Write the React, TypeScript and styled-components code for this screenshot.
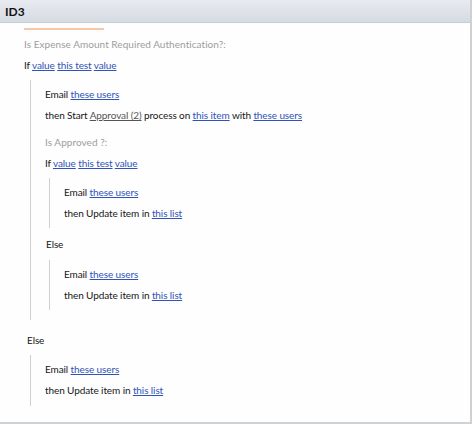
import React from 'react';
import styled, { createGlobalStyle } from 'styled-components';

const GlobalStyle = createGlobalStyle`
  html, body {
    margin: 0;
    padding: 0;
    background: #ffffff;
  }
  body {
    font-family: Lato, "Open Sans", "Liberation Sans", sans-serif;
    font-size: 10px;
    letter-spacing: -0.1px;
    color: #161616;
  }
`;

const Panel = styled.div`
  width: 470px;
  height: 422px;
  border-right: 2px solid #cfd0d2;
  border-bottom: 2px solid #d0d1d3;
  background: #fefefe;
  display: flex;
  flex-direction: column;
  overflow: hidden;
`;

const Header = styled.div`
  height: 22px;
  padding-left: 5px;
  display: flex;
  align-items: center;
  background: linear-gradient(to bottom, #e8ebf0 0%, #dde1e8 60%, #d6dae2 100%);
  border-bottom: 1px solid #c9cdd4;
  font-weight: 700;
  font-size: 12px;
  letter-spacing: 0;
  color: #111;
`;

const Body = styled.div`
  padding-left: 24px;
  display: flex;
  flex-direction: column;
`;

const Accent = styled.div`
  width: 80px;
  height: 2px;
  margin-top: 5px;
  background: #f6c8a6;
`;

const Row = styled.div<{ $top?: number; $shift?: number }>`
  height: 21px;
  line-height: 21px;
  white-space: nowrap;
  margin-top: ${(p) => p.$top ?? 0}px;
  padding-left: ${(p) => p.$shift ?? 0}px;
`;

const Label = styled(Row)`
  color: #9d9d9d;
  font-size: 10px;
  letter-spacing: 0.05px;
`;

const Block = styled.div<{ $left: number; $top: number; $bottom: number }>`
  margin-left: ${(p) => p.$left}px;
  margin-top: ${(p) => p.$top}px;
  padding: 4px 0 ${(p) => p.$bottom}px 14px;
  border-left: 1px solid #cfcfcf;
  display: flex;
  flex-direction: column;
`;

const Link = styled.a`
  color: #2f53b8;
  text-decoration: underline;
  cursor: pointer;
`;

const Muted = styled.a`
  color: #555;
  text-decoration: underline;
`;

const IfRow = ({ top }: { top?: number }) => (
  <Row $top={top}>
    If <Link>value</Link> <Link>this test</Link> <Link>value</Link>
  </Row>
);

const EmailUpdate = () => (
  <>
    <Row>
      Email <Link>these users</Link>
    </Row>
    <Row>
      then Update item in <Link>this list</Link>
    </Row>
  </>
);

export default function App() {
  return (
    <>
      <GlobalStyle />
      <Panel>
        <Header>ID3</Header>
        <Body>
          <Accent />
          <Label $top={4}>Is Expense Amount Required Authentication?:</Label>
          <IfRow />
          <Block $left={6} $top={4} $bottom={10}>
            <Row>
              Email <Link>these users</Link>
            </Row>
            <Row>
              then Start <Muted>Approval (2)</Muted> process on <Link>this item</Link> with{' '}
              <Link>these users</Link>
            </Row>
            <Label $top={6}>Is Approved ?:</Label>
            <IfRow />
            <Block $left={4} $top={4} $bottom={4}>
              <EmailUpdate />
            </Block>
            <Row $top={6} $shift={1}>
              Else
            </Row>
            <Block $left={4} $top={5} $bottom={4}>
              <EmailUpdate />
            </Block>
          </Block>
          <Row $top={10} $shift={3}>
            Else
          </Row>
          <Block $left={6} $top={4} $bottom={5}>
            <EmailUpdate />
          </Block>
        </Body>
      </Panel>
    </>
  );
}
